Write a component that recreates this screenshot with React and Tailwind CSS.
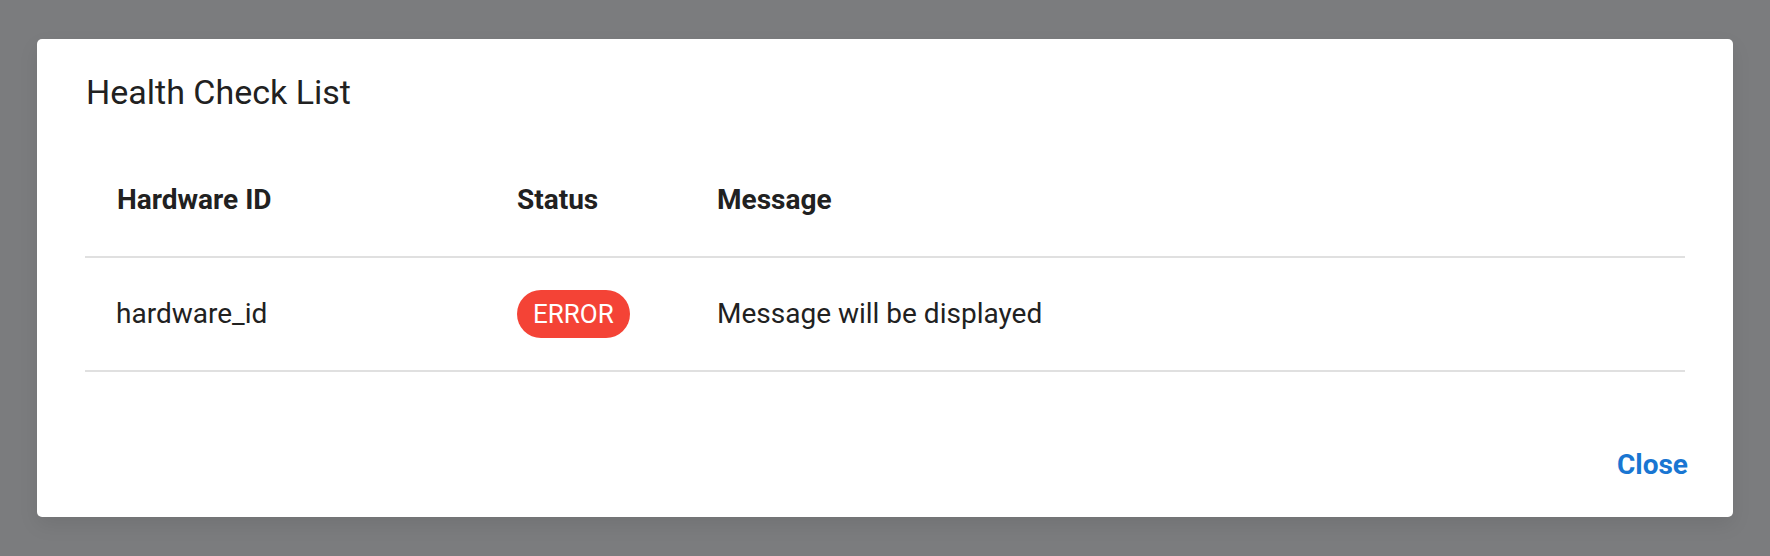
export default function App() {
  return (
    <div
      className="w-[1770px] h-[556px] bg-[#7b7c7e] pt-[39px] px-[37px]"
      style={{ fontFamily: "Roboto, 'Liberation Sans', sans-serif" }}
    >
      <div className="h-[478px] bg-white rounded-[5px] shadow-[0_8px_20px_0_rgba(0,0,0,0.08)] flex flex-col px-[48px] pt-[33px] text-[#212121]">
        <h2 className="text-[34px] leading-[40px] font-normal pl-[1px]">Health Check List</h2>
        <div className="mt-[32px]">
          <div className="grid grid-cols-[400px_200px_1fr] h-[114px] items-center border-b-2 border-[#e0e0e0] text-[28px] font-bold leading-[32px]">
            <div className="pl-[32px]">Hardware ID</div>
            <div className="pl-[32px]">Status</div>
            <div className="pl-[32px]">Message</div>
          </div>
          <div className="grid grid-cols-[400px_200px_1fr] h-[114px] items-center border-b-2 border-[#e0e0e0] text-[28px] leading-[32px]">
            <div className="pl-[31px]">hardware_id</div>
            <div className="pl-[32px]">
              <span className="inline-flex items-center h-[48px] px-[16px] rounded-full bg-[#f44336] text-white text-[26px] leading-[30px]">
                ERROR
              </span>
            </div>
            <div className="pl-[32px]">Message will be displayed</div>
          </div>
        </div>
        <div className="flex justify-end mt-[77px]">
          <button className="text-[28px] leading-[32px] font-bold text-[#1976d2] mr-[-3px]">Close</button>
        </div>
      </div>
    </div>
  );
}
